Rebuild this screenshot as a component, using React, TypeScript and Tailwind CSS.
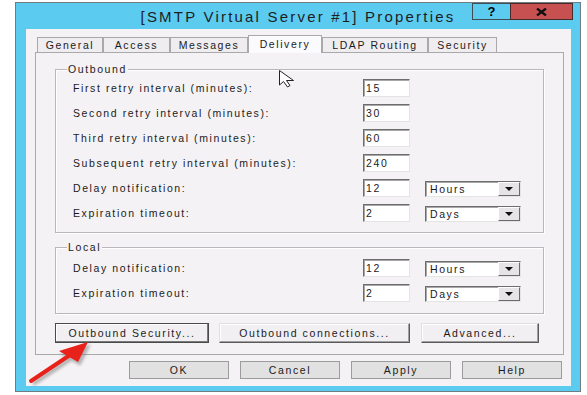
import React from "react";

const inputCls =
  "w-[47px] h-[18px] bg-white border border-t-[#6d6d6d] border-l-[#6d6d6d] border-r-[#e4e4e4] border-b-[#e4e4e4] shadow-[inset_1px_1px_0_#a8a8a8] pl-[2px] pt-[1px] leading-[14px]";

function Sel({ value }: { value: string }) {
  return (
    <div className="ml-[15px] w-[96px] h-[16px] self-end flex bg-white border border-t-[#6d6d6d] border-l-[#6d6d6d] border-r-[#e4e4e4] border-b-[#e4e4e4] shadow-[inset_1px_1px_0_#a8a8a8]">
      <div className="flex-1 pl-[4px] leading-[14px]">{value}</div>
      <div className="w-[22px] h-full bg-[#e6e4e7] border border-t-[#ffffff] border-l-[#ffffff] border-r-[#6a6a6a] border-b-[#6a6a6a] flex items-center justify-center">
        <svg width="8" height="4" viewBox="0 0 8 4">
          <path d="M0 0 H8 L4 4 Z" fill="#111" />
        </svg>
      </div>
    </div>
  );
}

function Row({ label, value, unit }: { label: string; value: string; unit?: string }) {
  return (
    <div className="h-[18px] flex items-center">
      <div className="w-[307px] pl-[17px] leading-[14px]">{label}</div>
      <div className={inputCls}>{value}</div>
      {unit && <Sel value={unit} />}
    </div>
  );
}

function Group({
  title,
  children,
  cls,
}: {
  title: string;
  children: React.ReactNode;
  cls: string;
}) {
  return (
    <div className={"mx-[19px] border border-[#b9b7bb] shadow-[inset_1px_1px_0_#ffffff,1px_1px_0_#ffffff] " + cls}>
      <div className="-mt-[7px] ml-[11px] px-[1px] w-fit leading-[13px] bg-[#f4f2f5]">{title}</div>
      {children}
    </div>
  );
}

const tabs: { label: string; w: string; selected?: boolean }[] = [
  { label: "General", w: "w-[66px]" },
  { label: "Access", w: "w-[67px]" },
  { label: "Messages", w: "w-[78px]" },
  { label: "Delivery", w: "w-[74px]", selected: true },
  { label: "LDAP Routing", w: "w-[106px]" },
  { label: "Security", w: "w-[69px]" },
];

export default function App() {
  return (
    <div className="w-[587px] h-[395px] bg-white relative overflow-hidden font-['Liberation_Sans',Arial,sans-serif] text-[10.5px] tracking-[1.6px] text-[#1b1b1b]">
      <div className="ml-[15px] mt-[2px] w-[566px] h-[390px] border border-[#6f7c82] bg-[#5ccbf0] flex flex-col">
        {/* title bar */}
        <div className="h-[26px] grid grid-cols-[1fr_auto_1fr]">
          <div />
          <div className="self-center text-[15px] tracking-[2.2px] text-[#1e1e1e] leading-[18px] pt-[1px]">
            [SMTP Virtual Server #1] Properties
          </div>
          <div className="justify-self-end self-start flex mr-[7px]">
            <div className="w-[38px] h-[17px] border border-[#3f4e55] border-r-0 flex items-center justify-center text-[13px] font-bold leading-none tracking-normal text-black">
              ?
            </div>
            <div className="w-[63px] h-[17px] bg-[#c75050] border border-[#4c2a2a] flex items-center justify-center">
              <svg width="11" height="8" viewBox="0 0 11 8">
                <path d="M1 0.5 L10 7.5 M10 0.5 L1 7.5" stroke="#111" strokeWidth="2.3" />
              </svg>
            </div>
          </div>
        </div>
        {/* client */}
        <div className="ml-[10px] mr-[9px] h-[357px] bg-[#f4f2f5] pt-[6px] pl-[9px] pr-[7px]">
          <div className="flex items-end h-[17px] pl-[2px]">
            {tabs.map((t) =>
              t.selected ? (
                <div
                  key={t.label}
                  className={t.w + " h-[18px] -mb-[1px] relative z-10 border border-b-0 border-[#a9a9a9] bg-[#fbfafc] flex justify-center pt-[2px] leading-[13px]"}
                >
                  {t.label}
                </div>
              ) : (
                <div
                  key={t.label}
                  className={t.w + " h-[15px] border border-b-0 border-[#a9a9a9] bg-[#efedf0] flex justify-center pt-[1px] leading-[13px]"}
                >
                  {t.label}
                </div>
              )
            )}
          </div>
          <div className="h-[303px] border border-[#a9a9a9] bg-[#f4f2f5] pt-[16px]">
            <Group title="Outbound" cls="pb-[10px]">
              <div className="mt-[3px] flex flex-col gap-[7px]">
                <Row label="First retry interval (minutes):" value="15" />
                <Row label="Second retry interval (minutes):" value="30" />
                <Row label="Third retry interval (minutes):" value="60" />
                <Row label="Subsequent retry interval (minutes):" value="240" />
                <Row label="Delay notification:" value="12" unit="Hours" />
                <Row label="Expiration timeout:" value="2" unit="Days" />
              </div>
            </Group>
            <Group title="Local" cls="mt-[14px] pb-[11px]">
              <div className="mt-[5px] flex flex-col gap-[7px]">
                <Row label="Delay notification:" value="12" unit="Hours" />
                <Row label="Expiration timeout:" value="2" unit="Days" />
              </div>
            </Group>
            <div className="mt-[9px] ml-[19px] flex">
              <div className="w-[154px] h-[20px] border border-[#4a4a4a] bg-[#f1eff2] shadow-[inset_-1px_-1px_0_#7a7a7a,inset_1px_1px_0_#ffffff] flex items-center justify-center leading-[13px]">
                Outbound Security...
              </div>
              <div className="ml-[10px] w-[191px] h-[20px] border border-t-[#e0e0e0] border-l-[#e0e0e0] border-r-[#5a5a5a] border-b-[#5a5a5a] bg-[#f1eff2] shadow-[inset_-1px_-1px_0_#a0a0a0,inset_1px_1px_0_#ffffff] flex items-center justify-center leading-[13px]">
                Outbound connections...
              </div>
              <div className="ml-[11px] w-[118px] h-[20px] border border-t-[#e0e0e0] border-l-[#e0e0e0] border-r-[#5a5a5a] border-b-[#5a5a5a] bg-[#f1eff2] shadow-[inset_-1px_-1px_0_#a0a0a0,inset_1px_1px_0_#ffffff] flex items-center justify-center leading-[13px]">
                Advanced...
              </div>
            </div>
          </div>
          <div className="mt-[6px] flex justify-end gap-[11px] mr-[2px]">
            {["OK", "Cancel", "Apply", "Help"].map((b) => (
              <div
                key={b}
                className="w-[100px] h-[18px] border border-[#9c9c9c] bg-[#e1e1e1] bg-[radial-gradient(#cfcfcf_0.6px,transparent_0.7px)] bg-[length:2px_2px] flex items-center justify-center leading-[13px]"
              >
                {b}
              </div>
            ))}
          </div>
        </div>
      </div>

      {/* mouse cursor */}
      <svg className="absolute left-[279px] top-[70px] pointer-events-none" width="17" height="18" viewBox="0 0 17 18">
        <path d="M0.5 0.5 L0.5 15 L4.5 11.5 L8.5 17 L11 15.5 L7.5 10.5 L14.5 10.5 Z" fill="#fff" stroke="#222" strokeWidth="1" strokeLinejoin="round" />
      </svg>

      {/* red annotation arrow */}
      <svg className="absolute left-0 top-0 pointer-events-none" width="587" height="395" viewBox="0 0 587 395">
        <defs>
          <filter id="blur" x="-20%" y="-20%" width="140%" height="140%">
            <feGaussianBlur stdDeviation="1.5" />
          </filter>
        </defs>
        <g transform="translate(2 3)" fill="#7a7a7a" stroke="#7a7a7a" opacity="0.55" filter="url(#blur)">
          <line x1="31" y1="381" x2="70" y2="355" strokeWidth="4" />
          <polygon points="88,342 59,351 78,362" />
        </g>
        <line x1="31" y1="381" x2="70" y2="355" stroke="#e8211b" strokeWidth="4" strokeLinecap="round" />
        <polygon points="88,342 59,351 78,362" fill="#e8211b" />
      </svg>
    </div>
  );
}
